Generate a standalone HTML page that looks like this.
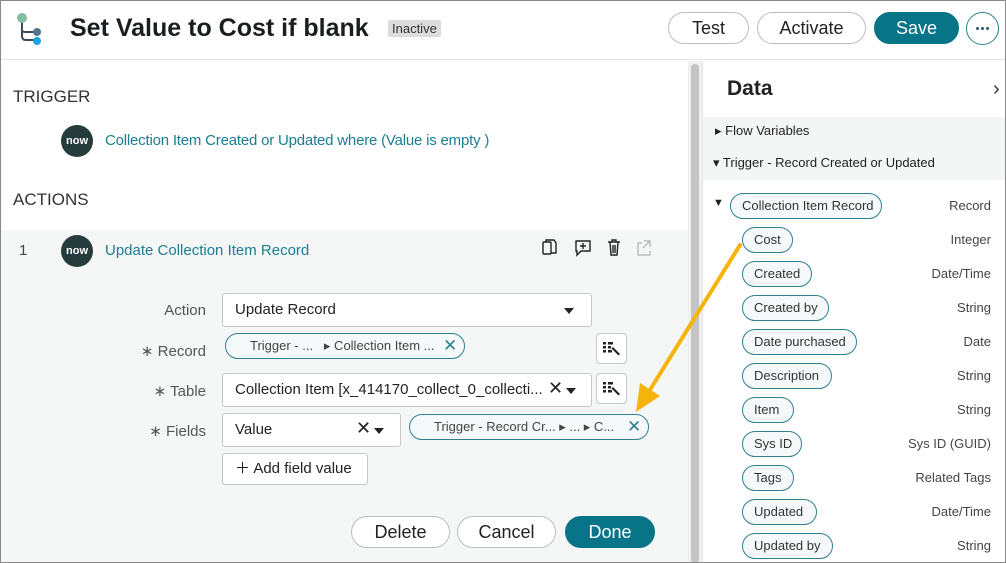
<!DOCTYPE html>
<html><head><meta charset="utf-8"><style>
*{box-sizing:border-box;margin:0;padding:0}
body{width:1006px;height:563px;overflow:hidden;font-family:"Liberation Sans",sans-serif;color:#222;background:#fff;position:relative}
.a{position:absolute}
.btn{position:absolute;border:1px solid #b9bfc1;border-radius:16px;background:#fff;font-size:18px;color:#222;text-align:center;line-height:30px}
.pri{background:#087487;border-color:#087487;color:#fff}
.pill{position:absolute;height:26px;border:1.5px solid #2d8091;border-radius:13px;background:#f6f9fa;font-size:13px;color:#333;line-height:23px;padding:0 11px;white-space:nowrap}
.typ{position:absolute;right:15px;font-size:13px;color:#444}
.lbl{position:absolute;font-size:15px;color:#555;text-align:right;width:80px;left:126px}
.box{position:absolute;background:#fff;border:1px solid #c4c8ca;border-radius:3px;font-size:15px;line-height:32px;padding-left:12px;color:#222}
.ib{position:absolute;width:31px;height:31px;background:#fff;border:1px solid #c4c8ca;border-radius:4px}
</style></head><body>
<div class="a" style="left:0;top:0;width:1006px;height:563px;border:1px solid #8a8a8a;z-index:10;pointer-events:none"></div>
<div class="a" style="left:0;top:0;width:1006px;height:60px;border-bottom:1px solid #e2e4e5"></div>
<svg class="a" style="left:14px;top:12px" width="32" height="34"><path d="M8 8 V24 Q8 28 12 28 H22 M8 18 Q8 20 12 20 H22" stroke="#3c4a54" stroke-width="2" fill="none"/><circle cx="8" cy="6" r="5" fill="#80bf9f"/><circle cx="23" cy="20" r="4" fill="#52758a"/><circle cx="23" cy="29" r="4" fill="#1ea2e6"/></svg>
<div class="a" style="left:70px;top:14px;font-size:25px;font-weight:bold;color:#1b1e20">Set Value to Cost if blank</div>
<div class="a" style="left:388px;top:20px;background:#dcdcdc;font-size:13px;color:#333;padding:1px 4px;border-radius:2px">Inactive</div>
<div class="btn" style="left:668px;top:12px;width:81px;height:32px">Test</div>
<div class="btn" style="left:757px;top:12px;width:109px;height:32px">Activate</div>
<div class="btn pri" style="left:874px;top:12px;width:85px;height:32px">Save</div>
<div class="a" style="left:966px;top:12px;width:33px;height:33px;border:1.5px solid #2d8091;border-radius:50%"></div>
<div class="a" style="left:976px;top:27px;width:3px;height:3px;background:#2d5a73;border-radius:50%;box-shadow:5px 0 #2d5a73,10px 0 #2d5a73"></div>
<div class="a" style="left:0;top:230px;width:688px;height:333px;background:#f5f6f6"></div>
<div class="a" style="left:13px;top:87px;font-size:17px;color:#333">TRIGGER</div>
<div class="a" style="left:61px;top:125px;width:32px;height:32px;border-radius:50%;background:#263b3c;color:#fff;font-size:11px;font-weight:bold;text-align:center;line-height:32px">now</div>
<div class="a" style="left:105px;top:132px;font-size:15px;color:#1b7d92;letter-spacing:-0.2px">Collection Item Created or Updated where (Value is empty )</div>
<div class="a" style="left:13px;top:190px;font-size:17px;color:#333">ACTIONS</div>
<div class="a" style="left:19px;top:242px;font-size:15px;color:#444">1</div>
<div class="a" style="left:61px;top:235px;width:32px;height:32px;border-radius:50%;background:#263b3c;color:#fff;font-size:11px;font-weight:bold;text-align:center;line-height:32px">now</div>
<div class="a" style="left:105px;top:242px;font-size:15px;color:#1b7d92">Update Collection Item Record</div>
<svg class="a" style="left:540px;top:238px" width="120" height="20" fill="none" stroke="#222" stroke-width="1.4"><rect x="3" y="4" width="8" height="12" rx="1"/><path d="M6 4V2h8l2 3v10h-5"/><path d="M36 3h14v10h-9l-4 4v-4h-1z"/><path d="M43 5v6M40 8h6"/><path d="M68 4h12M72 4V2h4v2M70 4l1 13h6l1-13M73 7v8M75 7v8"/><path d="M102 5h-4v12h12v-4M104 3h6v6M110 3l-7 7" stroke="#bbb"/></svg>
<div class="lbl" style="top:302px">Action</div>
<div class="box" style="left:222px;top:293px;width:370px;height:34px">Update Record</div>
<div class="a" style="left:564px;top:308px;border:5px solid transparent;border-top:6px solid #222"></div>
<div class="lbl" style="top:342px">∗ Record</div>
<div class="pill" style="left:225px;top:333px;width:240px;height:26px;padding-left:24px;color:#444">Trigger - ... &nbsp;&nbsp;▸ Collection Item ...</div>
<div class="a" style="left:443px;top:336px;font-size:17px;color:#2d8091">✕</div>
<div class="ib" style="left:596px;top:333px"></div>
<div class="lbl" style="top:382px">∗ Table</div>
<div class="box" style="left:222px;top:373px;width:370px;height:34px">Collection Item [x_414170_collect_0_collecti...</div>
<div class="a" style="left:548px;top:378px;font-size:18px">✕</div><div class="a" style="left:566px;top:388px;border:5px solid transparent;border-top:6px solid #222"></div>
<div class="ib" style="left:596px;top:373px"></div>
<svg class="a" style="left:603px;top:340px" width="18" height="60" fill="#222"><rect x="0" y="2" width="3" height="2.5"/><rect x="5" y="2" width="5" height="2.5"/><rect x="0" y="6" width="3" height="2.5"/><rect x="5" y="6" width="3" height="2.5"/><rect x="0" y="10" width="3" height="2.5"/><rect x="5" y="10" width="4" height="2.5"/><path d="M10 7l7 7-1.5 1.5-7-7z"/><g transform="translate(0,40)"><rect x="0" y="2" width="3" height="2.5"/><rect x="5" y="2" width="5" height="2.5"/><rect x="0" y="6" width="3" height="2.5"/><rect x="5" y="6" width="3" height="2.5"/><rect x="0" y="10" width="3" height="2.5"/><rect x="5" y="10" width="4" height="2.5"/><path d="M10 7l7 7-1.5 1.5-7-7z"/></g></svg>
<div class="lbl" style="top:422px">∗ Fields</div>
<div class="box" style="left:222px;top:413px;width:179px;height:34px">Value</div>
<div class="a" style="left:356px;top:418px;font-size:18px">✕</div><div class="a" style="left:374px;top:428px;border:5px solid transparent;border-top:6px solid #222"></div>
<div class="pill" style="left:409px;top:414px;width:240px;height:26px;padding-left:24px;color:#444">Trigger - Record Cr... ▸ ... ▸ C...</div>
<div class="a" style="left:627px;top:417px;font-size:17px;color:#2d8091">✕</div>
<div class="box" style="left:222px;top:453px;width:146px;height:32px;line-height:30px;padding-left:12px">＋ Add field value</div>
<div class="btn" style="left:351px;top:516px;width:99px;height:32px">Delete</div>
<div class="btn" style="left:457px;top:516px;width:99px;height:32px">Cancel</div>
<div class="btn pri" style="left:565px;top:516px;width:90px;height:32px">Done</div>
<div class="a" style="left:688px;top:61px;width:14px;height:502px;background:#f0f0f0"></div>
<div class="a" style="left:691px;top:64px;width:8px;height:499px;background:#c4c4c4;border-radius:4px"></div>
<div class="a" style="left:702px;top:61px;width:1px;height:502px;background:#e2e4e5"></div>
<div class="a" style="left:727px;top:77px;font-size:21px;font-weight:bold;color:#222">Data</div>
<div class="a" style="left:993px;top:78px;font-size:20px;color:#333">›</div>
<div class="a" style="left:703px;top:117px;width:303px;height:63px;background:#f4f5f5"></div>
<div class="a" style="left:715px;top:123px;font-size:13px;color:#222">▸ Flow Variables</div>
<div class="a" style="left:713px;top:155px;font-size:13px;color:#222">▾ Trigger - Record Created or Updated</div>
<div class="a" style="left:713px;top:197px;font-size:11px">▼</div>
<div class="pill" style="left:730px;top:193px;width:152px">Collection Item Record</div><div class="typ" style="top:198px">Record</div>
<div class="pill" style="left:742px;top:227px;width:51px">Cost</div><div class="typ" style="top:232px">Integer</div>
<div class="pill" style="left:742px;top:261px;width:70px">Created</div><div class="typ" style="top:266px">Date/Time</div>
<div class="pill" style="left:742px;top:295px;width:87px">Created by</div><div class="typ" style="top:300px">String</div>
<div class="pill" style="left:742px;top:329px;width:115px">Date purchased</div><div class="typ" style="top:334px">Date</div>
<div class="pill" style="left:742px;top:363px;width:90px">Description</div><div class="typ" style="top:368px">String</div>
<div class="pill" style="left:742px;top:397px;width:52px">Item</div><div class="typ" style="top:402px">String</div>
<div class="pill" style="left:742px;top:431px;width:60px">Sys ID</div><div class="typ" style="top:436px">Sys ID (GUID)</div>
<div class="pill" style="left:742px;top:465px;width:52px">Tags</div><div class="typ" style="top:470px">Related Tags</div>
<div class="pill" style="left:742px;top:499px;width:75px">Updated</div><div class="typ" style="top:504px">Date/Time</div>
<div class="pill" style="left:742px;top:533px;width:91px">Updated by</div><div class="typ" style="top:538px">String</div>
<svg class="a" style="left:0;top:0;z-index:5" width="1006" height="563"><path d="M740 245 L648 393" stroke="#f6b40b" stroke-width="4" stroke-linecap="round"/><path d="M636 412 L640 383 L660 396 Z" fill="#f6b40b"/></svg>
</body></html>
